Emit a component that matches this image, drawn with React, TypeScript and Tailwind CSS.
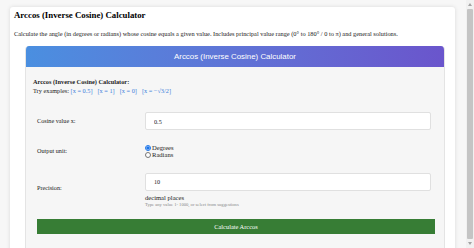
import { useState } from 'react';

const EXAMPLES = ['[x = 0.5]', '[x = 1]', '[x = 0]', '[x = −√3/2]'];

export default function App() {
  const [x, setX] = useState('0.5');
  const [unit, setUnit] = useState<'deg' | 'rad'>('deg');
  const [precision, setPrecision] = useState('10');

  return (
    <div className="h-[248px] overflow-hidden bg-[#f7f7f7] pl-[10px] pt-[7px] font-['Liberation_Serif',serif] text-[#222]">
      <div className="w-[445px] rounded-[3px] bg-white pb-[20px] pl-[4px] pt-[3px] shadow-[0_0_4px_rgba(0,0,0,0.12)]">
        <h1 className="text-[8.8px] font-bold leading-[11px] text-black">Arccos (Inverse Cosine) Calculator</h1>
        <p className="mt-[9px] whitespace-nowrap text-[6.35px] leading-[8px] text-[#222]">
          Calculate the angle (in degrees or radians) whose cosine equals a given value. Includes principal value range (0° to 180° / 0 to π) and general solutions.
        </p>

        {/* calculator */}
        <div className="ml-[11px] mt-[8px] w-[420px] overflow-hidden rounded-t-[4px] border-x border-[#e4e4e4]">
          <div className="flex h-[21px] items-center justify-center bg-gradient-to-r from-[#4a8fe0] to-[#6a55cc] font-['Liberation_Sans',sans-serif] text-[7.9px] text-white">
            Arccos (Inverse Cosine) Calculator
          </div>
          <div className="bg-[#f6f6f6] pb-[16px] pl-[7px] pr-[13px] pt-[10px]">
            <div className="text-[6.3px] font-bold leading-[9px]">Arccos (Inverse Cosine) Calculator:</div>
            <div className="text-[6.3px] leading-[9px]">
              Try examples:{' '}
              {EXAMPLES.map((e) => (
                <span key={e} className="mr-[5px] cursor-pointer text-[#3d80db]">{e}</span>
              ))}
            </div>

            <div className="mt-[17px] flex items-center pl-[4px]">
              <label className="w-[108px] text-[6.2px]">Cosine value x:</label>
              <input
                value={x}
                onChange={(e) => setX(e.target.value)}
                className="h-[18px] flex-1 rounded-[2px] border border-[#e0e0e0] bg-white px-[8px] text-[6.2px] outline-none"
              />
            </div>

            <div className="mt-[14px] flex items-center pl-[4px]">
              <label className="w-[108px] text-[6.2px]">Output unit:</label>
              <div className="flex flex-col text-[6.6px] leading-[7px]">
                <label className="flex items-center gap-[1px]">
                  <input type="radio" checked={unit === 'deg'} onChange={() => setUnit('deg')} className="m-0 h-[6px] w-[6px] accent-[#1a73e8]" />
                  Degrees
                </label>
                <label className="flex items-center gap-[1px]">
                  <input type="radio" checked={unit === 'rad'} onChange={() => setUnit('rad')} className="m-0 h-[6px] w-[6px]" />
                  Radians
                </label>
              </div>
            </div>

            <div className="mt-[9px] flex items-center pl-[4px]">
              <label className="w-[108px] text-[6.2px]">Precision:</label>
              <div className="flex-1">
                <input
                  value={precision}
                  onChange={(e) => setPrecision(e.target.value)}
                  className="h-[18px] w-full rounded-[2px] border border-[#e0e0e0] bg-white px-[8px] text-[6.2px] outline-none"
                />
                <div className="mt-[3px] text-[6.6px] leading-[8px]">decimal places</div>
                <div className="text-[4.6px] leading-[6px] text-[#888]">Type any value 1- 1000, or select from suggestions</div>
              </div>
            </div>

            <button className="ml-[4px] mt-[11px] block h-[15px] w-[398px] bg-[#377d35] text-[6.4px] text-white">
              Calculate Arccos
            </button>
          </div>
        </div>
      </div>

      {/* fake browser scrollbar */}
      <div className="fixed right-0 top-0 flex h-[248px] w-[8px] flex-col items-center bg-[#f1f1f1]">
        <div className="mt-[3px] h-0 w-0 border-x-[2px] border-b-[3px] border-x-transparent border-b-[#a3a3a3]" />
        <div className="mt-[3px] w-[6px] flex-1 rounded-[1px] bg-[#c4c4c4]" />
        <div className="mb-[3px] mt-[3px] h-0 w-0 border-x-[2px] border-t-[3px] border-x-transparent border-t-[#a3a3a3]" />
      </div>
    </div>
  );
}
